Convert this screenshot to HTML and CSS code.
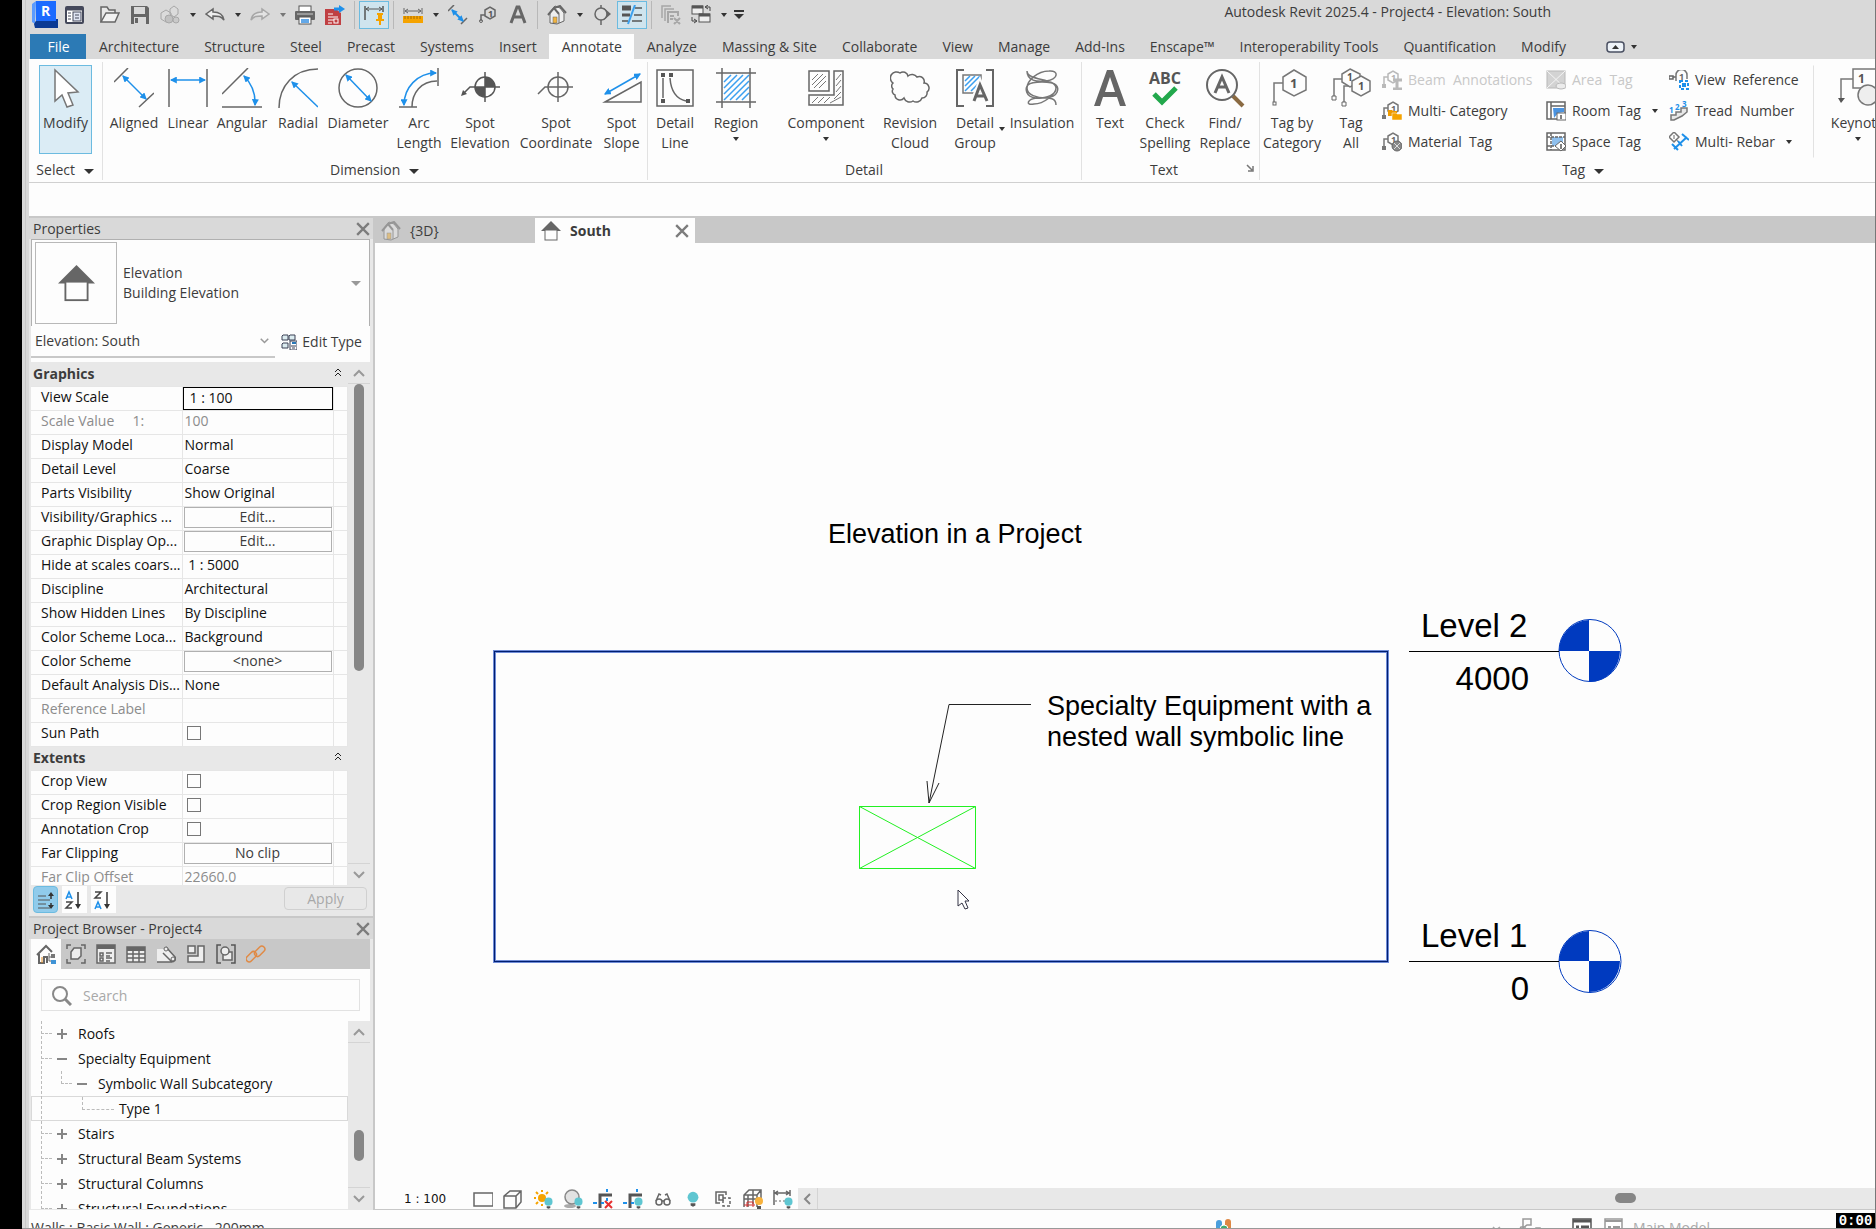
FILE: index.html
```html
<!DOCTYPE html>
<html lang="en">

<head>
    <meta charset="UTF-8">
    <meta name="viewport" content="width=device-width, initial-scale=1.0">
    <title>Autodesk Revit 2025.4 - Project4 - Elevation: South</title>
    <link rel="stylesheet" href="styles.css">
</head>

<body>
    <!-- shared arrow heads and small shapes -->
    <svg class="defs" width="0" height="0" aria-hidden="true">
        <defs>
            <marker id="arrow" markerWidth="6" markerHeight="6" refX="5" refY="3" orient="auto-start-reverse" markerUnits="userSpaceOnUse" viewBox="0 0 6 6">
                <path d="M0 0L6 3L0 6Z" fill="#1e90ea" />
            </marker>
            <marker id="arrowBig" markerWidth="7" markerHeight="7" refX="5" refY="3" orient="auto-start-reverse" markerUnits="userSpaceOnUse" viewBox="0 0 6 6">
                <path d="M0 0L6 3L0 6Z" fill="#1e90ea" />
            </marker>
            <symbol id="house" viewBox="0 0 20 20">
                <path d="M3 10V18L10 19L17 16V8L13 3L8 1L3 7Z" fill="#eee" stroke="#666" />
                <path d="M1 10L7 3L12 9M7 3L13 1L19 8" fill="none" stroke="#666" stroke-width="2" />
                <path d="M12 9V18" stroke="#666" />
                <rect x="6" y="12" width="4" height="6" fill="#f0b340" stroke="#666" stroke-width=".5" />
            </symbol>
            <symbol id="elevation" viewBox="0 0 20 20">
                <path d="M10 0L20 10H0Z" fill="#666" />
                <rect x="4" y="9" width="12" height="10" fill="#fdfdfd" stroke="#666" />
            </symbol>
            <symbol id="cross" viewBox="0 0 12 12">
                <path d="M1 1L11 11M11 1L1 11" stroke="#7c7c7c" stroke-width="2" />
            </symbol>
            <symbol id="bulb" viewBox="0 0 10 13">
                <circle cx="5" cy="5" r="4.500" fill="#5fc6d1" />
                <path d="M3 10H7V12L5 13L3 12Z" fill="#555" />
            </symbol>
            <symbol id="chevUp" viewBox="0 0 12 8">
                <path d="M1 7L6 2L11 7" fill="none" stroke="#999" stroke-width="2" />
            </symbol>
            <symbol id="chevDown" viewBox="0 0 12 8">
                <path d="M1 1L6 6L11 1" fill="none" stroke="#999" stroke-width="2" />
            </symbol>
            <symbol id="smallTag" viewBox="0 0 20 20">
                <path d="M2 15V7H6M6 4L11 1L16 4V10L11 13L6 10Z" fill="none" stroke="#777" stroke-width="1.500" />
                <rect x="0" y="14" width="4" height="4" fill="#777" />
                <text x="9" y="11" font-size="9" font-weight="bold" fill="#666">1</text>
            </symbol>
        </defs>
    </svg>

    <div class="app">
        <header class="titlebar">
            <button class="logo" aria-label="Revit home">
                <svg width="26" height="28" viewBox="0 0 26 28">
                    <path d="M3 24L0 22V4L4 1Z" fill="#5b9bff" />
                    <path d="M2 24L5 19H26V28H3Z" fill="#0b3a94" />
                    <rect x="4" y="1" width="20" height="20" fill="#1b6bff" />
                    <text x="9" y="16" font-size="14" font-weight="bold" fill="#fff">R</text>
                </svg>
            </button>
            <div class="quick">
                <button aria-label="Home panel"><svg width="20" height="20"><rect x="1" y="2" width="17" height="16" rx="1" fill="#fff" stroke="#44485a" stroke-width="2" /><path d="M1 4H18" stroke="#44485a" stroke-width="3" /><path d="M3 8H6M3 11H6M3 14H6" stroke="#44485a" /><rect x="8" y="7" width="8" height="9" fill="#dfe4f2" stroke="#44485a" /><path d="M10 10H14M10 13H14" stroke="#44485a" /></svg></button>
                <button aria-label="Open"><svg width="20" height="20"><path d="M1 17V2H7L9 5H15V8" fill="#e8e8e8" stroke="#666" stroke-width="1.500" /><path d="M1 17L6 8H19L15 17Z" fill="#f2f2f2" stroke="#666" stroke-width="1.500" /></svg></button>
                <button aria-label="Save"><svg width="20" height="20"><path d="M1 1H17L19 3V19H1Z" fill="#666" /><rect x="4" y="2" width="11" height="7" fill="#d9d9d9" /><rect x="4" y="12" width="12" height="7" fill="#d9d9d9" /><rect x="5" y="13" width="3" height="5" fill="#666" /></svg></button>
                <button aria-label="Synchronize" disabled><svg width="20" height="20"><path d="M1 8L6 5L11 8V14L6 17L1 14ZM10 4L14 1L18 4V9L14 12L10 9Z" fill="#ddd" stroke="#777" /><circle cx="9" cy="14" r="4" fill="#aaa" stroke="#777" /><circle cx="16" cy="15" r="3" fill="#bbb" stroke="#777" /></svg></button>
                <button class="drop" aria-label="Sync options"><i class="tri"></i></button>
                <button aria-label="Undo"><svg width="20" height="20"><path d="M1 9L8 4V7C14 7 18 9 19 15C16 11 13 11 8 11V14Z" fill="#eee" stroke="#666" stroke-width="1.500" /></svg></button>
                <button class="drop" aria-label="Undo list"><i class="tri"></i></button>
                <button aria-label="Redo" disabled><svg width="20" height="20"><path d="M19 9L12 4V7C6 7 2 9 1 15C4 11 7 11 12 11V14Z" fill="#eee" stroke="#777" stroke-width="1.500" /></svg></button>
                <button class="drop" aria-label="Redo list"><i class="tri muted"></i></button>
                <button aria-label="Print"><svg width="20" height="20"><rect x="4" y="1" width="12" height="6" fill="#fff" stroke="#555" /><rect x="0" y="6" width="20" height="9" rx="1" fill="#666" /><path d="M2 9H18" stroke="#ccc" /><rect x="4" y="12" width="12" height="7" fill="#fff" stroke="#555" /><rect x="6" y="14" width="8" height="4" fill="#63a8e8" /></svg></button>
                <button aria-label="Export PDF"><svg width="20" height="20"><path d="M0 4H11L16 8V20H0Z" fill="#c04043" /><path d="M3 9H8M3 12H13M3 15H9M3 18H7" stroke="#fff" /><rect x="9" y="14" width="4" height="4" fill="none" stroke="#fff" /><path d="M9 4H15" stroke="#1e90ea" stroke-width="3" /><path d="M14 0L20 4L14 8Z" fill="#1e90ea" /></svg></button>
                <span class="sep"></span>
                <button class="on" aria-label="Pin dimension"><svg width="20" height="20"><path d="M1 1V15M19 1V7" stroke="#555" stroke-width="1.500" /><path d="M2 4H18M5 2L2 4L5 6M15 2L18 4L15 6" fill="none" stroke="#555" /><path d="M13 8H19V10H18V14H20V16H12V14H14V10H13ZM15 16H17V20H15Z" fill="#f5a300" /></svg></button>
                <span class="sep"></span>
                <button aria-label="Measure"><svg width="20" height="20"><path d="M1 3V9M19 3V9M2 6H18M5 4L2 6L5 8M15 4L18 6L15 8" fill="none" stroke="#666" /><rect x="0" y="11" width="20" height="7" fill="#f5a300" /><path d="M2 14V11M5 14V11M8 14V11M11 14V11M14 14V11M17 14V11" stroke="#a86b00" /></svg></button>
                <button class="drop" aria-label="Measure options"><i class="tri"></i></button>
                <button aria-label="Aligned dimension"><svg width="20" height="20"><path d="M0 6L6 0M13 19L19 13" stroke="#666" stroke-width="1.500" /><path d="M4 5L15 16" stroke="#1e90ea" stroke-width="2" marker-start="url(#arrow)" marker-end="url(#arrow)" /></svg></button>
                <button aria-label="Tag"><svg width="20" height="20"><path d="M3 16V10H7M7 5L12 2L17 5V11L12 14L7 11Z" fill="none" stroke="#666" stroke-width="1.500" /><circle cx="3" cy="16" r="1.500" fill="none" stroke="#666" /><text x="10" y="12" font-size="9" font-weight="bold" fill="#555">1</text></svg></button>
                <button aria-label="Text"><svg width="20" height="20"><path d="M3 18L9 2H11L17 18M6 12H14" fill="none" stroke="#666" stroke-width="3" /></svg></button>
                <span class="sep"></span>
                <button aria-label="3D view"><svg width="20" height="20"><use href="#house" /></svg></button>
                <button class="drop" aria-label="3D options"><i class="tri"></i></button>
                <button aria-label="Section"><svg width="20" height="20"><path d="M12 3L19 9L12 15Z" fill="#666" /><circle cx="9" cy="9" r="6" fill="#ddd" stroke="#666" stroke-width="1.500" /><path d="M9 0V3M9 15V20" stroke="#666" stroke-width="1.500" /></svg></button>
                <button class="on" aria-label="Thin lines"><svg width="20" height="20"><path d="M0 3H9" stroke="#555" stroke-width="5" /><path d="M0 10H8" stroke="#555" stroke-width="3" /><path d="M0 16H6M13 3H20M12 10H20M10 16H20" stroke="#555" stroke-width="1.500" /><path d="M13 0L6 19" stroke="#3aa0ee" stroke-width="2" /></svg></button>
                <span class="sep"></span>
                <button aria-label="Close inactive views" disabled><svg width="20" height="20"><path d="M1 13V1H10M4 16V4H13" fill="none" stroke="#777" stroke-width="1.500" /><path d="M7 18V7H17V11M9 11H13M9 14H12M13 13L19 19M19 13L13 19" fill="none" stroke="#777" stroke-width="2" /></svg></button>
                <button aria-label="Switch windows"><svg width="20" height="20"><rect x="1" y="1" width="11" height="8" fill="#eee" stroke="#555" /><path d="M1 2H12" stroke="#555" stroke-width="3" /><rect x="8" y="9" width="11" height="8" fill="#eee" stroke="#555" /><path d="M8 10H19" stroke="#555" stroke-width="3" /><path d="M15 2H19V6M17 0L14 2L17 4M1 12V16H5M3 14L6 16L3 18" fill="none" stroke="#444" /></svg></button>
                <button class="drop" aria-label="Window list"><i class="tri"></i></button>
                <button class="drop" aria-label="Customize toolbar"><svg width="12" height="10"><path d="M1 1H11" stroke="#333" stroke-width="2" /><path d="M1 4H11L6 9Z" fill="#333" /></svg></button>
            </div>
            <h1>Autodesk Revit 2025.4 - Project4 - Elevation: South</h1>
        </header>

        <nav class="tabs">
            <button class="file">File</button>
            <button>Architecture</button>
            <button>Structure</button>
            <button>Steel</button>
            <button>Precast</button>
            <button>Systems</button>
            <button>Insert</button>
            <button class="active">Annotate</button>
            <button>Analyze</button>
            <button>Massing &amp; Site</button>
            <button>Collaborate</button>
            <button>View</button>
            <button>Manage</button>
            <button>Add-Ins</button>
            <button>Enscape™</button>
            <button>Interoperability Tools</button>
            <button>Quantification</button>
            <button>Modify</button>
            <button class="minimize" aria-label="Minimize ribbon"><svg width="32" height="12"><rect x="1" y="1" width="17" height="10" rx="3" fill="#eef3f8" stroke="#4a5062" stroke-width="1.500" /><path d="M6 8L9.500 4L13 8Z" fill="#333" /><path d="M25 4H31L28 8Z" fill="#333" /></svg></button>
        </nav>

        <div class="ribbon">
            <section class="panel">
                <div class="tools tools-select">
                    <button class="tool on"><svg width="40" height="40"><path d="M9 2V33L16 27L21 39L27 37L22 25L32 24Z" fill="#fff" stroke="#777" stroke-width="1.500" /></svg>Modify</button>
                </div>
                <h2>Select <i class="tri big"></i></h2>
            </section>

            <section class="panel">
                <div class="tools tools-dimension">
                    <button class="tool"><svg width="40" height="40"><path d="M0 14L14 0M25 39L40 25" stroke="#666" stroke-width="1.500" /><path d="M9 8L32 31" stroke="#1e90ea" stroke-width="1.500" marker-start="url(#arrowBig)" marker-end="url(#arrowBig)" /></svg>Aligned</button>
                    <button class="tool"><svg width="40" height="40"><path d="M1 1V39M39 1V39" stroke="#666" stroke-width="1.500" /><path d="M3 12H37" stroke="#1e90ea" stroke-width="1.500" marker-start="url(#arrowBig)" marker-end="url(#arrowBig)" /></svg>Linear</button>
                    <button class="tool"><svg width="40" height="40"><path d="M0 26L26 0M0 39H40" stroke="#666" stroke-width="1.500" /><path d="M22 8Q34 20 33 37" fill="none" stroke="#1e90ea" stroke-width="1.500" marker-start="url(#arrowBig)" marker-end="url(#arrowBig)" /></svg>Angular</button>
                    <button class="tool"><svg width="40" height="40"><path d="M1 40C1 18 16 1 40 1" fill="none" stroke="#666" stroke-width="1.500" /><path d="M14 14L40 39" stroke="#1e90ea" stroke-width="1.500" marker-start="url(#arrowBig)" /></svg>Radial</button>
                    <button class="tool"><svg width="40" height="40"><circle cx="20" cy="20" r="19" fill="none" stroke="#666" stroke-width="1.500" /><path d="M8 7L33 33" stroke="#1e90ea" stroke-width="1.500" marker-start="url(#arrowBig)" marker-end="url(#arrowBig)" /></svg>Diameter</button>
                    <button class="tool"><svg width="40" height="40"><path d="M39 0V18M0 39H18M13 39C13 25 22 13 38 13" fill="none" stroke="#666" stroke-width="1.500" /><path d="M5 37C5 20 18 5 37 5" fill="none" stroke="#1e90ea" stroke-width="1.500" marker-start="url(#arrowBig)" marker-end="url(#arrowBig)" /></svg>Arc<br>Length</button>
                    <button class="tool"><svg width="40" height="40"><circle cx="25" cy="19" r="10" fill="#fdfdfd" stroke="#555" stroke-width="1.500" /><path d="M25 19V9A10 10 0 0 1 35 19ZM25 19V29A10 10 0 0 1 15 19Z" fill="#555" /><path d="M25 4V34M3 26L10 19H40" fill="none" stroke="#555" stroke-width="1.500" /><path d="M1 28L3 22L7 26Z" fill="#555" /></svg>Spot<br>Elevation</button>
                    <button class="tool"><svg width="40" height="40"><circle cx="22" cy="19" r="10" fill="none" stroke="#666" stroke-width="1.500" /><path d="M22 4V34M2 26L9 19H37" fill="none" stroke="#666" stroke-width="1.500" /></svg>Spot<br>Coordinate</button>
                    <button class="tool"><svg width="40" height="40"><path d="M3 34L39 14V34Z" fill="none" stroke="#666" stroke-width="1.500" /><path d="M3 26L38 6" stroke="#1e90ea" stroke-width="1.500" marker-start="url(#arrowBig)" marker-end="url(#arrowBig)" /></svg>Spot<br>Slope</button>
                </div>
                <h2>Dimension <i class="tri big"></i></h2>
            </section>

            <section class="panel">
                <div class="tools tools-detail">
                    <button class="tool"><svg width="40" height="40"><rect x="2" y="2" width="36" height="36" fill="none" stroke="#666" stroke-width="1.500" /><path d="M8 10V30M15 10C16 24 22 31 31 33" fill="none" stroke="#666" stroke-width="1.500" /><path d="M6 5H10V9H6ZM14 5H18V9H14ZM6 31H10V35H6ZM31 31H35V35H31Z" fill="#555" /></svg>Detail<br>Line</button>
                    <button class="tool"><svg width="40" height="40"><path d="M8 14L15 7M8 20L21 7M8 26L27 7M8 32L33 7M14 32L33 13M20 32L33 19M26 32L33 25" stroke="#3a9ff0" stroke-width="1.500" /><path d="M6 0V40M34 0V40M0 5H40M0 34H40" stroke="#666" stroke-width="1.500" /></svg>Region<i class="tri"></i></button>
                    <button class="tool"><svg width="40" height="40"><path d="M3 3H23V23H3ZM28 3H37V37H3V27H28Z" fill="none" stroke="#666" stroke-width="1.500" /><path d="M6 12L12 6M6 17L17 6M8 20L20 8M13 20L20 13M30 12L35 6M30 18L35 12M30 24L35 18M28 31L35 24M6 35L12 29M12 35L18 29M18 35L24 29M24 35L35 29" stroke="#777" /></svg>Component<i class="tri"></i></button>
                    <button class="tool"><svg width="40" height="40"><path d="M3 15A6 6 0 0 1 10 5A5 5 0 0 1 18 8A6 6 0 0 1 27 9A5 5 0 0 1 34 15A5 5 0 0 1 37 24A5 5 0 0 1 32 30A6 6 0 0 1 23 33A6 6 0 0 1 14 30A5 5 0 0 1 5 27A4 4 0 0 1 3 21A4 4 0 0 1 3 15Z" fill="none" stroke="#666" stroke-width="1.500" /></svg>Revision<br>Cloud</button>
                    <button class="tool"><svg width="40" height="40"><path d="M9 2H2V38H9M31 2H38V38H31" fill="none" stroke="#666" stroke-width="2" /><rect x="8" y="7" width="18" height="18" fill="none" stroke="#777" stroke-width="1.500" /><path d="M10 13L15 8M10 18L20 8M10 23L25 8M16 23L25 14" stroke="#3a9ff0" stroke-width="1.500" /><path d="M18 34L25 16L32 34M21 28H29" fill="none" stroke="#fdfdfd" stroke-width="6" /><path d="M19 33L25 17L32 33M21 28H29" fill="none" stroke="#666" stroke-width="3" /></svg>Detail<br>Group<i class="tri side"></i></button>
                    <button class="tool"><svg width="40" height="40"><path d="M5 3C5 13 15 14 24 13C37 11 37 2 27 3C15 3 5 13 5 20C5 27 15 30 24 30C37 29 37 20 34 17C30 13 10 13 6 17C3 20 3 29 14 30C22 31 34 27 34 37M34 20C34 27 25 30 15 30C5 31 3 38 12 36C22 36 34 26 34 20M5 3C5 13 34 10 34 20" fill="none" stroke="#777" stroke-width="1.500" /></svg>Insulation</button>
                </div>
                <h2>Detail</h2>
            </section>

            <section class="panel with-launcher">
                <div class="tools tools-text">
                    <button class="tool"><svg width="40" height="40"><path d="M4 38H10L13 29H27L30 38H36L23 2H17ZM15 24L20 9L25 24Z" fill="#666" /></svg>Text</button>
                    <button class="tool"><svg width="40" height="40"><text x="20" y="16" text-anchor="middle" font-size="16" font-weight="bold" fill="#555">ABC</text><path d="M9 26L17 34L31 20" fill="none" stroke="#22a84c" stroke-width="5" /></svg>Check<br>Spelling</button>
                    <button class="tool"><svg width="40" height="40"><path d="M28 28L38 38" stroke="#8a6a42" stroke-width="4" /><circle cx="17" cy="17" r="15" fill="#fdfdfd" stroke="#666" stroke-width="2" /><path d="M10 25L17 9L24 25M12 19H22" fill="none" stroke="#666" stroke-width="3" /></svg>Find/<br>Replace</button>
                </div>
                <h2>Text</h2>
                <button class="launcher" aria-label="Text settings"><svg width="8" height="8"><path d="M1 1L6 6M7 2V7H2" fill="none" stroke="#777" stroke-width="1.500" /></svg></button>
            </section>

            <section class="panel">
                <div class="tools tools-tag">
                    <button class="tool"><svg width="40" height="40"><path d="M2 34V15H11M22 2L34 9V22L22 28L11 22V9Z" fill="none" stroke="#777" stroke-width="1.500" /><rect x="1" y="34" width="3" height="3" fill="none" stroke="#666" /><text x="18" y="20" font-size="13" font-weight="bold" fill="#555">1</text></svg>Tag by<br>Category</button>
                    <button class="tool"><svg width="40" height="40"><path d="M3 28V11H11M13 34V18H21" fill="none" stroke="#777" stroke-width="1.500" /><path d="M19 1L29 6V14L19 19L11 14V6Z" fill="#fdfdfd" stroke="#777" stroke-width="1.500" /><path d="M30 8L39 13V23L30 28L21 23V13Z" fill="#fdfdfd" stroke="#777" stroke-width="1.500" /><path d="M1 28H5V32H1ZM11 34H15V38H11Z" fill="none" stroke="#666" /><text x="16" y="13" font-size="10" font-weight="bold" fill="#555">1</text><text x="27" y="22" font-size="11" font-weight="bold" fill="#555">1</text></svg>Tag<br>All</button>
                    <div class="stack">
                        <button disabled><svg width="20" height="20"><use href="#smallTag" /><path d="M11 10H20M11 19H20M15 10V19" stroke="#777" stroke-width="3" /></svg>Beam&nbsp; Annotations</button>
                        <button><svg width="20" height="20"><use href="#smallTag" /><path d="M6 9H10L11 10H15V15H6Z" fill="#ee9a00" /><path d="M10 12H14L15 13H20V19H10Z" fill="#f5a300" stroke="#fdfdfd" stroke-width=".5" /></svg>Multi- Category</button>
                        <button><svg width="20" height="20"><use href="#smallTag" /><circle cx="15" cy="14" r="5" fill="#888" stroke="#666" /><path d="M12 11L18 17M18 11L12 17" stroke="#ddd" /></svg>Material&nbsp; Tag</button>
                    </div>
                    <div class="stack">
                        <button disabled><svg width="20" height="20"><rect x="1" y="1" width="18" height="17" fill="#aaa" stroke="#777" /><path d="M1 1L19 18M19 1L1 18" stroke="#eee" /><ellipse cx="15" cy="16" rx="5" ry="3" fill="#ddd" stroke="#777" /></svg>Area&nbsp; Tag</button>
                        <button><svg width="20" height="20"><rect x="1" y="1" width="18" height="17" fill="#fff" stroke="#666" stroke-width="1.500" /><path d="M5 1V18M5 5H19" stroke="#666" stroke-width="1.500" /><path d="M7 7H18V11L12 12L8 17Z" fill="#4b93e0" /><rect x="11" y="12" width="9" height="7" fill="#fff" stroke="#666" /><path d="M15 14V18" stroke="#555" stroke-width="1.500" /></svg>Room&nbsp; Tag<i class="tri"></i></button>
                        <button><svg width="20" height="20"><rect x="1" y="1" width="18" height="17" fill="#fff" stroke="#666" stroke-width="1.500" /><path d="M6 5H17V14H6Z" fill="#8fc0ee" /><path d="M5 1V18M1 5H19M1 14H12" stroke="#666" stroke-width="1.500" stroke-dasharray="3 1" /><path d="M15 9L20 14L15 19L9 14Z" fill="#fff" stroke="#666" /><path d="M15 12V17" stroke="#555" stroke-width="1.500" /></svg>Space&nbsp; Tag</button>
                    </div>
                    <div class="stack">
                        <button><svg width="20" height="20"><path d="M0 6H4V9H0ZM4 7H7" fill="none" stroke="#666" stroke-width="1.500" /><path d="M7 11V5A5 5 0 0 1 18 5V9" fill="none" stroke="#777" stroke-width="1.500" /><text x="10" y="10" font-size="9" font-weight="bold" fill="#666">1</text><rect x="11" y="11" width="8" height="8" fill="none" stroke="#1e90ea" stroke-width="2" stroke-dasharray="3 2" /><rect x="13" y="13" width="4" height="4" fill="#1e90ea" /></svg>View&nbsp; Reference</button>
                        <button><svg width="20" height="20"><path d="M2 14H7V11H12V7H18V11L13 15L5 19H2Z" fill="#e8e8e8" stroke="#777" stroke-width="1.500" /><text x="0" y="12" font-size="8" font-weight="bold" fill="#1e90ea">1</text><text x="6" y="9" font-size="8" font-weight="bold" fill="#1e90ea">2</text><text x="13" y="6" font-size="8" font-weight="bold" fill="#1e90ea">3</text></svg>Tread&nbsp; Number</button>
                        <button><svg width="20" height="20"><path d="M5 0L10 5L5 10L0 5Z" fill="#fff" stroke="#777" stroke-width="1.500" /><path d="M5 3V7M7 7L11 12" stroke="#666" /><path d="M5 17L18 5M3 12L9 18M13 2L20 8M9 9L13 14" stroke="#1e90ea" stroke-width="2" /></svg>Multi- Rebar<i class="tri"></i></button>
                    </div>
                    <button class="tool keynote"><svg width="40" height="40"><path d="M15 1H40V20H15ZM15 11H3V30" fill="none" stroke="#777" stroke-width="1.500" /><path d="M0 30H7L3 35Z" fill="#555" /><text x="20" y="15" font-size="12" font-weight="bold" fill="#555">1</text><circle cx="30" cy="27" r="10" fill="#eee" stroke="#777" stroke-width="1.500" /></svg>Keynote<i class="tri"></i></button>
                </div>
                <h2>Tag <i class="tri big"></i></h2>
            </section>
        </div>

        <div class="options"></div>

        <div class="main">
            <aside class="dock">
                <section class="properties">
                    <header class="dock-title">
                        <h2>Properties</h2>
                        <button aria-label="Close properties"><svg width="14" height="14"><use href="#cross" /></svg></button>
                    </header>
                    <button class="type">
                        <span class="thumb"><svg width="37" height="37"><use href="#elevation" /></svg></span>
                        <span class="type-name">Elevation<br>Building Elevation</span>
                        <i class="tri big grey"></i>
                    </button>
                    <div class="instance">
                        <span class="instance-select">
                            <select aria-label="Instance">
                                <option>Elevation: South</option>
                            </select>
                            <svg width="9" height="6"><use href="#chevDown" /></svg>
                        </span>
                        <button><svg width="16" height="16"><path d="M2 1H7V6H1V2ZM9 1H14V6H8V2ZM2 9H7V14H1V10Z" fill="#dcecf0" stroke="#3a4055" /><rect x="9" y="7" width="7" height="9" fill="#fff" stroke="#3a4055" /><rect x="11" y="8" width="4" height="2" fill="#2878b8" /><path d="M10 12H15M11 14H14" stroke="#3a4055" /></svg>Edit Type</button>
                    </div>
                    <div class="grid">
                        <table>
                            <colgroup><col class="c-name"><col class="c-value"><col></colgroup>
                            <tbody>
                                <tr class="group"><th colspan="3">Graphics<svg width="8" height="10"><path d="M1 4L4 1L7 4M1 8L4 5L7 8" fill="none" stroke="#222" /></svg></th></tr>
                                <tr><th><label for="scale">View Scale</label></th><td class="focus"><input id="scale" type="text" value="1 : 100"></td><td></td></tr>
                                <tr class="off"><th>Scale Value &nbsp;&nbsp;&nbsp; 1:</th><td>100</td><td></td></tr>
                                <tr><th>Display Model</th><td>Normal</td><td></td></tr>
                                <tr><th>Detail Level</th><td>Coarse</td><td></td></tr>
                                <tr><th>Parts Visibility</th><td>Show Original</td><td></td></tr>
                                <tr><th>Visibility/Graphics ...</th><td><button>Edit...</button></td><td></td></tr>
                                <tr><th>Graphic Display Op...</th><td><button>Edit...</button></td><td></td></tr>
                                <tr><th>Hide at scales coars...</th><td>&nbsp;1 : 5000</td><td></td></tr>
                                <tr><th>Discipline</th><td>Architectural</td><td></td></tr>
                                <tr><th>Show Hidden Lines</th><td>By Discipline</td><td></td></tr>
                                <tr><th>Color Scheme Loca...</th><td>Background</td><td></td></tr>
                                <tr><th>Color Scheme</th><td><button>&lt;none&gt;</button></td><td></td></tr>
                                <tr><th>Default Analysis Dis...</th><td>None</td><td></td></tr>
                                <tr class="off"><th>Reference Label</th><td></td><td></td></tr>
                                <tr><th><label for="sun">Sun Path</label></th><td><input id="sun" type="checkbox"></td><td></td></tr>
                                <tr class="group"><th colspan="3">Extents<svg width="8" height="10"><path d="M1 4L4 1L7 4M1 8L4 5L7 8" fill="none" stroke="#222" /></svg></th></tr>
                                <tr><th><label for="crop">Crop View</label></th><td><input id="crop" type="checkbox"></td><td></td></tr>
                                <tr><th><label for="region">Crop Region Visible</label></th><td><input id="region" type="checkbox"></td><td></td></tr>
                                <tr><th><label for="annotation">Annotation Crop</label></th><td><input id="annotation" type="checkbox"></td><td></td></tr>
                                <tr><th>Far Clipping</th><td><button>No clip</button></td><td></td></tr>
                                <tr class="off"><th>Far Clip Offset</th><td>22660.0</td><td></td></tr>
                            </tbody>
                        </table>
                        <div class="scroll">
                            <button aria-label="Scroll up"><svg width="12" height="8"><use href="#chevUp" /></svg></button>
                            <span class="track"><span class="thumb-bar long"></span></span>
                            <button aria-label="Scroll down"><svg width="12" height="8"><use href="#chevDown" /></svg></button>
                        </div>
                    </div>
                    <footer class="sort">
                        <button class="on" aria-label="Group by category"><svg width="24" height="26"><path d="M4 9H12M4 13H16M4 17H12M4 21H16" stroke="#555" /><path d="M17 7V12M17 16V21" stroke="#333" stroke-width="1.500" /><path d="M14 9L17 5L20 9ZM14 18L17 22L20 18Z" fill="#333" /></svg></button>
                        <button aria-label="Sort ascending"><svg width="24" height="26"><path d="M4 12L7 5L10 12M5 10H9" fill="none" stroke="#1e90ea" stroke-width="1.500" /><path d="M4 15H10L4 21H10" fill="none" stroke="#444" stroke-width="1.500" /><path d="M16 5V19" stroke="#333" stroke-width="1.500" /><path d="M13 17H19L16 22Z" fill="#333" /></svg></button>
                        <button aria-label="Sort descending"><svg width="24" height="26"><path d="M4 5H10L4 11H10" fill="none" stroke="#444" stroke-width="1.500" /><path d="M4 22L7 15L10 22M5 20H9" fill="none" stroke="#1e90ea" stroke-width="1.500" /><path d="M16 5V19" stroke="#333" stroke-width="1.500" /><path d="M13 17H19L16 22Z" fill="#333" /></svg></button>
                        <button class="apply" disabled>Apply</button>
                    </footer>
                </section>

                <section class="browser">
                    <header class="dock-title">
                        <h2>Project Browser - Project4</h2>
                        <button aria-label="Close project browser"><svg width="14" height="14"><use href="#cross" /></svg></button>
                    </header>
                    <div class="browser-tabs">
                        <button class="on" aria-label="All"><svg width="20" height="20"><path d="M1 11L10 2L16 8M3 10V19H8V13H11V19" fill="none" stroke="#666" stroke-width="2" /><path d="M6 19V13" stroke="#e08a20" /><path d="M13 9V17H17M13 13H17" fill="none" stroke="#666" /><rect x="15" y="10" width="4" height="4" fill="#777" /><rect x="15" y="16" width="5" height="4" fill="#3f93d6" /></svg></button>
                        <button aria-label="Views"><svg width="20" height="20"><path d="M1 5V1H5M15 1H19V5M19 15V19H15M5 19H1V15" fill="none" stroke="#666" stroke-width="1.500" /><path d="M5 8L8 4H15V12L12 15H5Z" fill="#eee" stroke="#666" stroke-width="1.500" /></svg></button>
                        <button aria-label="Legends"><svg width="20" height="20"><rect x="1" y="1" width="18" height="18" fill="#eee" stroke="#666" stroke-width="1.500" /><path d="M1 3H19" stroke="#666" stroke-width="4" /><path d="M4 9H7V12H4ZM4 14H7V17H4ZM10 9H16M10 12H14M10 14H16M10 17H14" fill="none" stroke="#666" stroke-width="1.500" /></svg></button>
                        <button aria-label="Schedules"><svg width="20" height="20"><rect x="1" y="3" width="18" height="15" fill="#eee" stroke="#666" stroke-width="1.500" /><path d="M1 5H19" stroke="#666" stroke-width="4" /><path d="M1 10H19M1 14H19M7 5V18M13 5V18" stroke="#666" stroke-width="1.500" /></svg></button>
                        <button aria-label="Sheets"><svg width="20" height="20"><path d="M1 5H10L19 13V18H1Z" fill="#eee" /><path d="M1 18H16M10 3L19 13C21 16 17 19 15 17L7 9" fill="#eee" stroke="#666" stroke-width="1.500" /><circle cx="10" cy="5" r="2" fill="#eee" stroke="#666" /><circle cx="17" cy="15" r="2" fill="none" stroke="#666" /></svg></button>
                        <button aria-label="Families"><svg width="20" height="20"><path d="M2 2H9V9H2ZM12 2H18V18H2V12H12Z" fill="#eee" stroke="#666" stroke-width="1.500" /></svg></button>
                        <button aria-label="Groups"><svg width="20" height="20"><path d="M5 1H1V19H5M15 1H19V19H15" fill="none" stroke="#555" stroke-width="1.500" /><rect x="7" y="8" width="9" height="8" fill="#eee" stroke="#666" stroke-width="1.500" /><circle cx="9" cy="7" r="4" fill="#eee" stroke="#666" stroke-width="1.500" /></svg></button>
                        <button aria-label="Links"><svg width="20" height="20"><g fill="none" stroke="#e08a45" stroke-width="1.500"><rect x="-1" y="9" width="12" height="6" rx="3" transform="rotate(-45 6 12)" /><rect x="8" y="5" width="12" height="6" rx="3" transform="rotate(-45 13 8)" /></g></svg></button>
                    </div>
                    <label class="search">
                        <svg width="21" height="21"><circle cx="9" cy="9" r="7" fill="none" stroke="#888" stroke-width="2" /><path d="M14 14L20 20" stroke="#888" stroke-width="3" /></svg>
                        <input type="search" placeholder="Search" aria-label="Search">
                    </label>
                    <div class="tree-wrap">
                        <ul class="tree">
                            <li><span class="branch"></span><button class="plus" aria-label="Expand"></button>Roofs</li>
                            <li><span class="branch"></span><button aria-label="Collapse"></button>Specialty Equipment</li>
                            <li class="level1"><span class="branch"></span><button aria-label="Collapse"></button>Symbolic Wall Subcategory</li>
                            <li class="level2"><span class="branch"></span>Type 1</li>
                            <li><span class="branch"></span><button class="plus" aria-label="Expand"></button>Stairs</li>
                            <li><span class="branch"></span><button class="plus" aria-label="Expand"></button>Structural Beam Systems</li>
                            <li><span class="branch"></span><button class="plus" aria-label="Expand"></button>Structural Columns</li>
                            <li><span class="branch"></span><button class="plus" aria-label="Expand"></button>Structural Foundations</li>
                        </ul>
                        <div class="scroll">
                            <button aria-label="Scroll up"><svg width="12" height="8"><use href="#chevUp" /></svg></button>
                            <span class="track low"><span class="thumb-bar short"></span></span>
                            <button aria-label="Scroll down"><svg width="12" height="8"><use href="#chevDown" /></svg></button>
                        </div>
                    </div>
                </section>
            </aside>

            <main class="workspace">
                <div class="view-tabs">
                    <button class="view-tab faded"><svg width="20" height="20"><use href="#house" /></svg>{3D}</button>
                    <div class="view-tab active"><svg width="20" height="20"><use href="#elevation" /></svg>South<button aria-label="Close view"><svg width="14" height="14"><use href="#cross" /></svg></button></div>
                </div>

                <svg class="drawing" role="img" aria-label="South elevation">
                    <text x="453" y="300" font-size="27">Elevation in a Project</text>

                    <!-- wall outline -->
                    <rect x="119.500" y="408.500" width="893" height="310" fill="none" stroke="#6f8bd8" stroke-width="3" />
                    <rect x="119.500" y="408.500" width="893" height="310" fill="none" stroke="#001f70" />

                    <!-- equipment and its leader -->
                    <path d="M484 563.500H600.500V625.500H484.500V563.500L600.500 625.500M600.500 563.500L484.500 625.500" fill="none" stroke="#22f022" />
                    <path d="M656 461.500H574L554 560M552 538L554 560L564 540" fill="none" stroke="#222" />
                    <text x="672" y="472" font-size="27">Specialty Equipment with a</text>
                    <text x="672" y="503" font-size="27">nested wall symbolic line</text>

                    <!-- level heads -->
                    <g stroke="#003abf">
                        <circle cx="1215" cy="407.500" r="31" fill="none" />
                        <path d="M1214 408V377A31 31 0 0 0 1184 408ZM1214 408V439A31 31 0 0 0 1245 408Z" fill="#003abf" stroke="none" />
                        <circle cx="1215" cy="718.500" r="31" fill="none" />
                        <path d="M1214 718V688A31 31 0 0 0 1184 718ZM1214 718V749A31 31 0 0 0 1245 718Z" fill="#003abf" stroke="none" />
                    </g>
                    <path d="M1034 408.500H1184M1034 718.500H1184" stroke="#000" />
                    <text x="1046" y="394" font-size="33">Level 2</text>
                    <text x="1154" y="447" font-size="33" text-anchor="end">4000</text>
                    <text x="1046" y="704" font-size="33">Level 1</text>
                    <text x="1154" y="757" font-size="33" text-anchor="end">0</text>

                    <path d="M583 647V663L587 660L590 666L593 665L590 658H594Z" fill="#fff" stroke="#334" />
                </svg>

                <div class="view-bar">
                    <button class="scale">1 : 100</button>
                    <div class="view-icons">
                        <button aria-label="Visual style"><svg width="20" height="20"><rect x="1" y="4" width="19" height="13" fill="none" stroke="#666" stroke-width="1.500" /></svg></button>
                        <button aria-label="Detail level"><svg width="20" height="20"><path d="M1 7L7 2H18V13L13 19H1ZM1 7H13V19M13 7L18 2" fill="none" stroke="#666" stroke-width="1.500" /></svg></button>
                        <button aria-label="Sun path"><svg width="20" height="20"><circle cx="9" cy="9" r="4" fill="#f5a300" /><path d="M9 1V3M9 15V17M1 9H3M3 3L5 5M15 3L13 5M3 15L5 13" stroke="#f5a300" stroke-width="2" /><use href="#bulb" x="11" y="8" width="9" height="12" /></svg></button>
                        <button aria-label="Shadows"><svg width="20" height="20"><ellipse cx="7" cy="17" rx="6" ry="2" fill="#aaa" /><circle cx="9" cy="8" r="7" fill="#e2e2e2" stroke="#888" stroke-width="1.500" /><use href="#bulb" x="11" y="8" width="9" height="12" /></svg></button>
                        <button aria-label="Crop view"><svg width="20" height="20"><path d="M7 19V6H19" fill="none" stroke="#555" stroke-width="3" /><path d="M14 0V3M0 14H4M8 14H11M14 9V12" stroke="#1e90ea" stroke-width="2" /><path d="M12 12L19 19M19 12L12 19" stroke="#e53030" stroke-width="2" /></svg></button>
                        <button aria-label="Show crop region"><svg width="20" height="20"><path d="M7 19V6H19" fill="none" stroke="#555" stroke-width="3" /><path d="M14 0V3M0 14H4M8 14H11" stroke="#1e90ea" stroke-width="2" /><use href="#bulb" x="11" y="8" width="9" height="12" /></svg></button>
                        <button aria-label="Temporary hide"><svg width="20" height="20"><circle cx="6" cy="13" r="3" fill="none" stroke="#666" stroke-width="1.500" /><circle cx="14" cy="13" r="3" fill="none" stroke="#666" stroke-width="1.500" /><path d="M3 12L6 5L8 6M17 12L14 5L12 6M9 12H11" fill="none" stroke="#666" stroke-width="1.500" /></svg></button>
                        <button aria-label="Reveal hidden"><svg width="20" height="20"><use href="#bulb" x="4" y="2" width="12" height="16" /></svg></button>
                        <button aria-label="Temporary view properties"><svg width="20" height="20"><path d="M13 6V3H3V14H7M6 6H10V11H6Z" fill="none" stroke="#666" stroke-width="1.500" /><rect x="10" y="9" width="7" height="8" fill="none" stroke="#666" stroke-width="1.500" stroke-dasharray="3 2" /></svg></button>
                        <button aria-label="Analytical model"><svg width="20" height="20"><path d="M1 18V6L6 1H18V9M1 6H14V18M14 6L18 1M1 10H14M5 6V18M10 1V15" fill="none" stroke="#666" stroke-width="1.500" /><path d="M4 18V13H10V18M1 16H12" fill="none" stroke="#d03030" /><circle cx="16" cy="12" r="4" fill="#f7b13c" /><path d="M14 17H18V20H14Z" fill="#555" /></svg></button>
                        <button aria-label="Constraints"><svg width="20" height="20"><path d="M1 1V16M17 1V7M2 4H16M5 2L2 4L5 6M13 2L16 4L13 6" fill="none" stroke="#666" stroke-width="1.500" /><path d="M2 12H12" stroke="#666" stroke-dasharray="2 2" /><use href="#bulb" x="11" y="8" width="9" height="12" /></svg></button>
                    </div>
                    <div class="hscroll">
                        <button aria-label="Scroll left"><svg width="8" height="12"><path d="M7 1L2 6L7 11" fill="none" stroke="#888" stroke-width="2" /></svg></button>
                        <span class="htrack"><span class="hthumb"></span></span>
                    </div>
                </div>
            </main>
        </div>

        <footer class="status">
            <span class="hint">Walls : Basic Wall : Generic - 200mm</span>
            <svg class="people" width="18" height="16"><rect x="1" y="2" width="6" height="12" rx="3" fill="#4b9fdc" /><rect x="10" y="1" width="6" height="12" rx="3" fill="#dd8844" /><circle cx="9" cy="11" r="4" fill="#40ad70" stroke="#fff" /></svg>
            <svg class="worksets" width="58" height="16"><path d="M1 9L4 12L8 9" fill="none" stroke="#aaa" stroke-width="1.500" /><path d="M31 1H39V7H35L31 10ZM26 14L29 9H34M44 10H48V15H44Z" fill="none" stroke="#999" stroke-width="1.500" /></svg>
            <svg class="lists" width="52" height="16"><rect x="1" y="1" width="18" height="18" fill="#fff" stroke="#555" stroke-width="1.500" /><path d="M1 3H19M4 9H7M9 9H17" stroke="#555" stroke-width="3" /><rect x="33" y="1" width="17" height="18" fill="#fff" stroke="#999" stroke-width="1.500" /><path d="M33 3H50M36 9H39M41 9H48" stroke="#999" stroke-width="2" /></svg>
            <span class="option">Main Model</span>
        </footer>
        <span class="clock">0:00</span>
    </div>
</body>

</html>
```
FILE: styles.css
```css
* {
    box-sizing: border-box;
}

body {
    margin: 0;
    padding-left: 22px;
    background-color: #000;
    color: #3c3c3c;
    font-family: "Open Sans", "Noto Sans", sans-serif;
    font-size: 14px;
    line-height: 20px;
}

button, input, select {
    margin: 0;
    padding: 0;
    border: none;
    background: none;
    color: inherit;
    font: inherit;
}

h1, h2 {
    margin: 0;
    font-size: 14px;
    font-weight: normal;
}

svg {
    display: block;
    flex: none;
}

.defs {
    position: absolute;
}

.app {
    position: relative;
    display: flex;
    flex-direction: column;
    height: 100vh;
    overflow: hidden;
    padding-left: 7px;
    border-right: 1px solid #777;
    border-bottom: 1px solid #999;
    background: linear-gradient(to right, #d9d9d9 3px, #c8c8c8 3px, #c8c8c8 4px, #d9d9d9 4px);
}

/* small drop-down triangles */
.tri {
    display: inline-block;
    border: 3px solid transparent;
    border-top: 4px solid #333;
    border-bottom: none;
}

.tri.big {
    margin-left: 5px;
    vertical-align: middle;
    border-width: 5px 5px 0;
}

.tri.grey {
    border-top-color: #999;
}

.tri.muted {
    border-top-color: #777;
}

/* title bar */
.titlebar {
    display: flex;
    flex: none;
    height: 34px;
    padding-left: 3px;
}

.logo {
    align-self: flex-start;
    margin-right: 2px;
}

.quick {
    display: flex;
    align-items: flex-start;
    padding-top: 1px;
}

.quick button {
    display: flex;
    align-items: center;
    justify-content: center;
    width: 30px;
    height: 28px;
    border: 1px solid transparent;
}

.quick button:first-child {
    margin-right: 5px;
}

.quick .drop {
    width: 15px;
}

.quick .on {
    border-color: #6cbbe0;
    background-color: #cfe4ee;
}

button:disabled svg {
    opacity: 0.5;
}

.sep {
    width: 1px;
    height: 28px;
    margin: 0 4px;
    background-color: #b8b8b8;
}

.titlebar h1 {
    flex: 1;
    padding: 2px 324px 0 0;
    text-align: right;
}

/* ribbon tabs */
.tabs {
    display: flex;
    flex: none;
    height: 25px;
    padding-left: 1px;
}

.tabs button {
    padding: 0 12px 0 13px;
    white-space: nowrap;
}

.tabs .file {
    width: 56px;
    background-color: #2c7ab5;
    color: #fff;
}

.tabs .active {
    background-color: #fdfdfd;
}

.tabs .minimize {
    padding-left: 28px;
}

/* ribbon */
.ribbon {
    display: flex;
    flex: none;
    height: 124px;
    overflow: hidden;
    border-bottom: 1px solid #d0d0d0;
    background-color: #fdfdfd;
}

.panel {
    position: relative;
    flex: none;
    margin: 3px 0 2px;
    padding: 3px 5px 0 4px;
    border-right: 1px solid #e2e2e2;
}

.panel:last-child {
    border-right: none;
}

.panel h2 {
    margin-top: 6px;
    text-align: center;
}

.with-launcher h2 {
    padding-right: 12px;
}

.tools {
    display: grid;
    height: 89px;
}

.tools-select {
    grid-template-columns: 53px;
    padding: 0 5px 0 6px;
}

.tools-dimension {
    grid-template-columns: 54px 54px 54px 58px 62px 60px 62px 90px 41px;
}

.tools-detail {
    grid-template-columns: 46px 76px 104px 64px 66px 68px;
}

.tools-text {
    grid-template-columns: 48px 62px 58px;
}

.tools-tag {
    grid-template-columns: 56px 62px 164px 123px 144px 89px;
}

.tool {
    position: relative;
    display: flex;
    flex-direction: column;
    align-items: center;
    padding-top: 2px;
    border: 1px solid transparent;
    white-space: nowrap;
}

.tool svg {
    margin-bottom: 5px;
}

.tool .tri {
    margin-top: 4px;
}

.tool .side {
    position: absolute;
    right: 2px;
    bottom: 22px;
}

.tool.on {
    border-color: #6cbbe0;
    background-color: #dbecf5;
}

.tool.keynote {
    border-left-color: #e2e2e2;
}

.launcher {
    position: absolute;
    right: 5px;
    bottom: 8px;
}

.stack {
    display: flex;
    flex-direction: column;
}

.stack button {
    display: flex;
    align-items: center;
    gap: 6px;
    height: 31px;
    padding-bottom: 2px;
    white-space: nowrap;
}

.stack button:disabled {
    color: #c8c8c8;
}

.stack .tri {
    margin-left: 5px;
}

.options {
    flex: none;
    height: 33px;
    background-color: #fdfdfd;
}

.main {
    display: flex;
    flex: 1;
    min-height: 0;
}

/* left dock */
.dock {
    display: flex;
    flex: none;
    flex-direction: column;
    width: 346px;
    padding: 0 3px 1px 2px;
    border-right: 2px solid #c8c8c8;
    background-color: #e8e8e8;
}

.properties {
    display: flex;
    flex: 1;
    flex-direction: column;
    min-height: 0;
}

.browser {
    display: flex;
    flex: none;
    flex-direction: column;
    height: 293px;
}

.dock-title {
    display: flex;
    flex: none;
    align-items: center;
    justify-content: space-between;
    height: 23px;
    margin: 0 -3px 0 -2px;
    padding: 0 3px 0 4px;
    border-top: 2px solid #c8c8c8;
    background-color: #d9d9d9;
}

.type {
    display: flex;
    flex: none;
    align-items: center;
    height: 87px;
    padding: 0 8px 0 3px;
    border: 1px solid #b0b0b0;
    border-bottom: none;
    background-color: #fdfdfd;
    text-align: left;
}

.thumb {
    display: flex;
    align-items: center;
    justify-content: center;
    width: 82px;
    height: 82px;
    border: 1px solid #b8b8b8;
}

.type-name {
    flex: 1;
    padding-left: 6px;
}

.instance {
    display: flex;
    flex: none;
    justify-content: space-between;
    height: 36px;
    padding: 0 8px 4px 0;
    background-color: #fdfdfd;
}

.instance-select {
    display: flex;
    align-items: center;
    width: 244px;
    padding-right: 6px;
    border-bottom: 2px solid #c8c8c8;
}

.instance select {
    flex: 1;
    padding-left: 4px;
    appearance: none;
}

.instance button {
    display: flex;
    align-items: center;
    gap: 5px;
}

.grid {
    display: flex;
    flex: 1;
    min-height: 0;
    overflow: hidden;
}

.grid table {
    flex: none;
    align-self: flex-start;
    width: 317px;
    border-collapse: collapse;
    table-layout: fixed;
    background-color: #fdfdfd;
    color: #111;
}

.c-name {
    width: 151px;
}

.c-value {
    width: 151px;
}

.grid th, .grid td {
    height: 24px;
    padding: 0 0 2px 2px;
    overflow: hidden;
    border: 1px solid #e6e6e6;
    border-left: none;
    font-weight: normal;
    text-align: left;
    line-height: 20px;
    white-space: nowrap;
}

.grid th {
    padding-left: 10px;
}

.grid .group th {
    padding: 0 6px 0 2px;
    border: none;
    background-color: #e8e8e8;
    color: #3c3c3c;
    font-weight: bold;
}

.group svg {
    float: right;
    margin-top: 4px;
}

.grid .off th, .grid .off td {
    color: #8c8c8c;
}

.grid td button {
    display: block;
    width: 148px;
    height: 21px;
    margin-left: -1px;
    border: 1px solid #b0b0b0;
    color: #3c3c3c;
    line-height: 18px;
}

.grid .focus {
    padding: 0;
}

.grid input[type="text"] {
    display: block;
    width: 150px;
    height: 23px;
    padding: 0 0 2px 6px;
    border: 1px solid #000;
}

input[type="checkbox"] {
    display: block;
    width: 14px;
    height: 14px;
    margin-left: 2px;
    border: 1px solid #777;
    appearance: none;
}

.scroll {
    display: flex;
    flex: 1;
    flex-direction: column;
}

.scroll button {
    display: flex;
    flex: none;
    align-items: center;
    justify-content: center;
    height: 21px;
}

.track {
    flex: 1;
    border: solid #d4d4d4;
    border-width: 1px 0;
}

.track.low {
    padding-top: 87px;
}

.thumb-bar {
    display: block;
    width: 10px;
    margin: 0 auto;
    border-radius: 5px;
    background-color: #868686;
}

.long {
    height: 60%;
}

.short {
    height: 31px;
}

.sort {
    display: flex;
    flex: none;
    gap: 4px;
    height: 31px;
    padding: 1px 3px 3px 2px;
}

.sort button {
    width: 25px;
    background-color: #fdfdfd;
}

.sort .on {
    border: 1px solid #6cbbe0;
    border-radius: 4px;
    background-color: #90cbeb;
}

.sort .apply {
    width: 83px;
    height: 23px;
    margin: 1px 0 0 auto;
    border: 1px solid #d0d0d0;
    border-radius: 4px;
    background-color: #e8e8e8;
    color: #a8a8a8;
}

.browser-tabs {
    display: flex;
    flex: none;
    height: 30px;
    background-color: #c8c8c8;
}

.browser-tabs button {
    display: flex;
    align-items: center;
    justify-content: center;
    width: 30px;
}

.browser-tabs .on {
    background-color: #fdfdfd;
}

.search {
    display: flex;
    flex: none;
    align-items: center;
    height: 52px;
    padding: 0 10px;
    background-color: #fdfdfd;
}

.search svg {
    margin: 0 -31px 0 10px;
}

.search input {
    flex: 1;
    height: 32px;
    padding-left: 41px;
    border: 1px solid #e2e2e2;
}

.search input::placeholder {
    color: #a8a8a8;
}

.tree-wrap {
    display: flex;
    flex: 1;
    min-height: 0;
    overflow: hidden;
}

.tree {
    position: relative;
    flex: none;
    width: 317px;
    margin: 0;
    padding: 0;
    overflow: hidden;
    background-color: #fdfdfd;
    color: #111;
    list-style: none;
}

.tree::before {
    content: "";
    position: absolute;
    top: 0;
    bottom: 0;
    left: 10px;
    border-left: 1px dashed #bbb;
}

.tree li {
    display: flex;
    align-items: center;
    height: 25px;
    padding-left: 10px;
}

.tree .level1 {
    padding-left: 30px;
}

.tree .level2 {
    padding-left: 50px;
    border: 1px solid #d9d9d9;
}

.branch {
    width: 11px;
    margin-right: 5px;
    border-top: 1px dashed #bbb;
}

.level1 .branch, .level2 .branch {
    align-self: flex-start;
    height: 13px;
    border-top: none;
    border-bottom: 1px dashed #bbb;
    border-left: 1px dashed #bbb;
}

.level2 .branch {
    width: 32px;
}

.tree button {
    position: relative;
    width: 10px;
    height: 2px;
    margin-right: 11px;
    background-color: #868686;
}

.plus::after {
    content: "";
    position: absolute;
    top: -4px;
    left: 4px;
    width: 2px;
    height: 10px;
    background-color: #868686;
}

/* drawing area */
.workspace {
    display: flex;
    flex: 1;
    flex-direction: column;
    min-width: 0;
    background-color: #fdfdfd;
}

.view-tabs {
    display: flex;
    flex: none;
    height: 27px;
    padding-top: 2px;
    background-color: #c8c8c8;
}

.view-tab {
    display: flex;
    align-items: center;
    gap: 9px;
    width: 160px;
    padding: 0 6px;
}

.view-tab.faded svg {
    opacity: 0.5;
}

.view-tab.active {
    background-color: #fdfdfd;
    font-weight: bold;
}

.view-tab button {
    margin-left: auto;
}

.drawing {
    flex: 1;
    width: 100%;
    min-height: 0;
    font-family: "Liberation Sans", Arial, sans-serif;
}

.view-bar {
    display: flex;
    flex: none;
    align-items: center;
    height: 22px;
    border-bottom: 1px solid #c8c8c8;
}

.scale {
    width: 98px;
    padding-left: 29px;
    color: #111;
    font-family: "DejaVu Sans", sans-serif;
    font-size: 12px;
    text-align: left;
}

.view-icons {
    display: flex;
    gap: 10px;
    margin-right: 5px;
}

.hscroll {
    display: flex;
    flex: 1;
    height: 21px;
    background-color: #e8e8e8;
}

.hscroll button {
    width: 20px;
    padding-left: 5px;
    border-right: 1px solid #d4d4d4;
}

.htrack {
    flex: 1;
    padding: 5px 0 0 74%;
}

.hthumb {
    display: block;
    width: 21px;
    height: 10px;
    border-radius: 5px;
    background-color: #868686;
}

/* status bar, partly below the window edge */
.status {
    display: flex;
    flex: none;
    height: 18px;
    overflow: hidden;
    padding: 8px 165px 0 2px;
    background-color: #fdfdfd;
    white-space: nowrap;
}

.hint {
    width: 1184px;
}

.people {
    margin-right: auto;
}

.worksets {
    margin-right: 22px;
}

.lists {
    margin-right: 9px;
}

.option {
    color: #aaa;
}

.clock {
    position: absolute;
    right: 0;
    bottom: -1px;
    width: 39px;
    height: 16px;
    background-color: #000;
    color: #fff;
    font-family: "Liberation Mono", monospace;
    font-size: 14px;
    font-weight: bold;
    line-height: 16px;
    text-align: center;
}
```
